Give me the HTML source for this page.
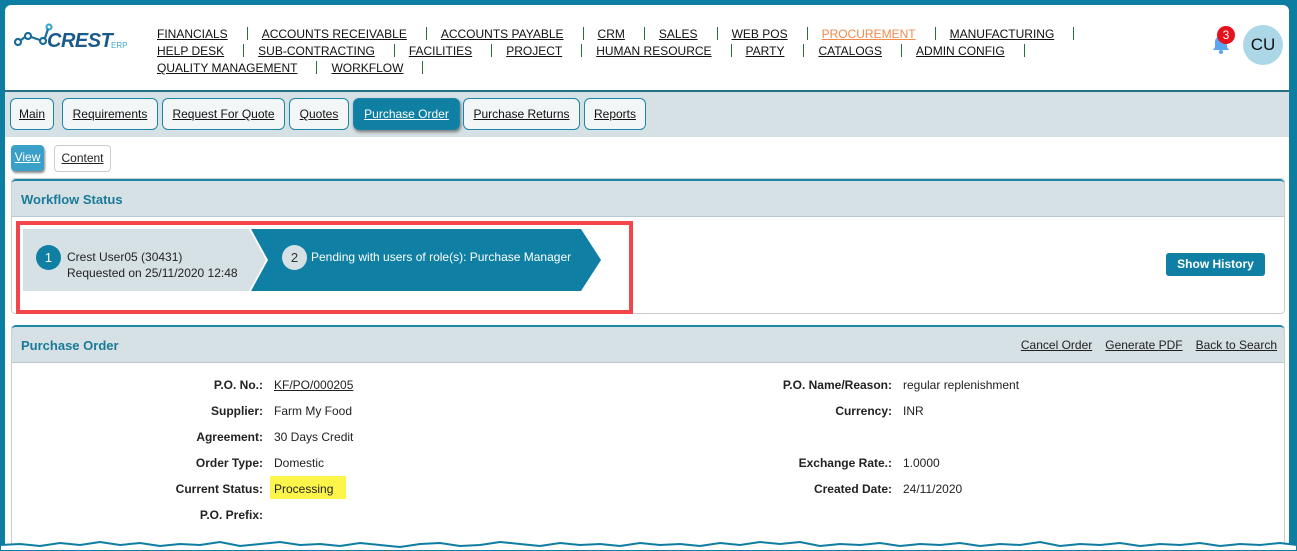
<!DOCTYPE html>
<html><head><style>
*{box-sizing:border-box;margin:0;padding:0}
body{width:1297px;height:551px;background:#0d7ea2;font-family:"Liberation Sans",Arial,sans-serif;font-size:12px;color:#222;position:relative;overflow:hidden}
.page{position:absolute;left:5px;top:5px;width:1284px;height:546px;background:#fff;border-radius:6px 6px 0 0;overflow:hidden}
.abs{position:absolute}
.nav{position:absolute;left:152px;top:21px;font-size:12px;line-height:17px;color:#111}
.nav div{white-space:nowrap}
.nav a{color:#111;text-decoration:underline}
.nav .s{display:inline-block;width:1px;height:13px;background:#2e6b3a;margin:0 14px -2px 19px}
.tabbar{position:absolute;left:0;top:85px;width:1284px;height:47px;background:#d6e1e6;border-top:2px solid #2a6f8a}
.tab{position:absolute;top:6px;height:32px;border:1px solid #1b86a8;border-radius:6px;background:#f2f6f6;font-size:12px;text-align:center;line-height:30px;text-decoration:underline;color:#111}
.tab.on{background:#0f7fa3;color:#fff;box-shadow:1px 2px 3px #777}
.panel{position:absolute;left:6px;width:1274px;border:1px solid #ccc;border-radius:4px}
.ph{height:38px;background:#d6e1e6;border-bottom:1px solid #b9c8cf;border-top:2px solid #1b86a8;border-radius:4px 4px 0 0;color:#1a7a98;font-weight:bold;font-size:13px;padding:11px 9px}
.lbl{position:absolute;font-weight:bold;text-align:right;font-size:12px}
.val{position:absolute;font-size:12px}
</style></head><body>
<div class="page">
 <svg class="abs" style="left:8px;top:17px" width="115" height="32" viewBox="0 0 115 32">
  <g fill="none" stroke="#1a6d99" stroke-width="2.2"><circle cx="5" cy="20" r="3"/><circle cx="15" cy="14" r="3"/><circle cx="30" cy="19" r="3"/><circle cx="36" cy="5" r="2.5" stroke="#3fa7cf"/><path d="M8 18l4-3M18 15l9 3M32 16l3-9"/></g>
  <text x="34" y="25" font-family="Liberation Sans" font-style="italic" font-weight="bold" font-size="20" fill="#1a5a8a" letter-spacing="-0.5">CREST</text>
  <text x="98" y="26" font-family="Liberation Sans" font-size="8" fill="#3fa7cf">ERP</text>
 </svg>
 <div class="nav">
  <div><a>FINANCIALS</a><span class="s"></span><a>ACCOUNTS RECEIVABLE</a><span class="s"></span><a>ACCOUNTS PAYABLE</a><span class="s"></span><a>CRM</a><span class="s"></span><a>SALES</a><span class="s"></span><a>WEB POS</a><span class="s"></span><a style="color:#f08a4b">PROCUREMENT</a><span class="s"></span><a>MANUFACTURING</a><span class="s"></span></div>
  <div><a>HELP DESK</a><span class="s"></span><a>SUB-CONTRACTING</a><span class="s"></span><a>FACILITIES</a><span class="s"></span><a>PROJECT</a><span class="s"></span><a>HUMAN RESOURCE</a><span class="s"></span><a>PARTY</a><span class="s"></span><a>CATALOGS</a><span class="s"></span><a>ADMIN CONFIG</a><span class="s"></span></div>
  <div><a>QUALITY MANAGEMENT</a><span class="s"></span><a>WORKFLOW</a><span class="s"></span></div>
 </div>
 <svg class="abs" style="left:1204px;top:27px" width="24" height="24" viewBox="0 0 24 24"><path d="M4 18h16l-2-3v-5a6 6 0 0 0-12 0v5z" fill="#5aa7f0"/><circle cx="12" cy="20" r="2" fill="#5aa7f0"/></svg>
 <div class="abs" style="left:1212px;top:21px;width:18px;height:18px;border-radius:50%;background:#e8101a;color:#fff;font-size:12px;text-align:center;line-height:18px">3</div>
 <div class="abs" style="left:1238px;top:20px;width:40px;height:40px;border-radius:50%;background:#acd7e6;color:#111;font-size:17px;text-align:center;line-height:40px">CU</div>
 <div class="tabbar">
  <div class="tab" style="left:5px;width:44px">Main</div>
  <div class="tab" style="left:57px;width:96px">Requirements</div>
  <div class="tab" style="left:157px;width:123px">Request For Quote</div>
  <div class="tab" style="left:284px;width:60px">Quotes</div>
  <div class="tab on" style="left:348px;width:107px">Purchase Order</div>
  <div class="tab" style="left:458px;width:117px">Purchase Returns</div>
  <div class="tab" style="left:579px;width:62px">Reports</div>
 </div>
 <div class="abs" style="left:6px;top:140px;width:33px;height:26px;background:#3aa0c8;border-radius:4px;color:#fff;text-decoration:underline;text-align:center;line-height:24px;box-shadow:1px 2px 2px #888">View</div>
 <div class="abs" style="left:49px;top:140px;width:57px;height:27px;border:1px solid #ccc;border-radius:4px;text-decoration:underline;text-align:center;line-height:25px">Content</div>
 <div class="panel" style="top:173px;height:136px">
  <div class="ph">Workflow Status</div>
  <svg class="abs" style="left:11px;top:50px" width="590" height="62"><polygon points="0,0 226,0 243,31 226,62 0,62" fill="#d6e1e6"/><polygon points="228,0 558,0 578,31 558,62 228,62 245,31" fill="#0f7fa3"/></svg>
  <div class="abs" style="left:24px;top:66px;width:25px;height:25px;border-radius:50%;background:#0f7fa3;color:#fff;text-align:center;line-height:25px;font-size:13px">1</div>
  <div class="abs" style="left:55px;top:70px;line-height:16px">Crest User05 (30431)<br>Requested on 25/11/2020 12:48</div>
  <div class="abs" style="left:270px;top:66px;width:25px;height:25px;border-radius:50%;background:#d6e1e6;color:#333;text-align:center;line-height:25px;font-size:13px">2</div>
  <div class="abs" style="left:299px;top:71px;color:#fff">Pending with users of role(s): Purchase Manager</div>
  <div class="abs" style="left:4px;top:42px;width:617px;height:93px;border:4px solid #f4454a"></div>
  <div class="abs" style="left:1154px;top:74px;width:99px;height:23px;background:#0f7fa3;border-radius:3px;color:#fff;font-weight:bold;text-align:center;line-height:23px">Show History</div>
 </div>
 <div class="panel" style="top:320px;height:240px;border-top:none">
  <div class="ph">Purchase Order</div>
  <div class="abs" style="right:7px;top:13px;font-size:12px;text-decoration:underline;word-spacing:0"><span>Cancel Order</span><span style="margin-left:13px">Generate PDF</span><span style="margin-left:13px">Back to Search</span></div>
  <div class="lbl" style="right:1021px;top:53px">P.O. No.:</div><div class="val" style="left:262px;top:53px;text-decoration:underline">KF/PO/000205</div>
  <div class="lbl" style="right:1021px;top:79px">Supplier:</div><div class="val" style="left:262px;top:79px">Farm My Food</div>
  <div class="lbl" style="right:1021px;top:105px">Agreement:</div><div class="val" style="left:262px;top:105px">30 Days Credit</div>
  <div class="lbl" style="right:1021px;top:131px">Order Type:</div><div class="val" style="left:262px;top:131px">Domestic</div>
  <div class="lbl" style="right:1021px;top:157px">Current Status:</div><div class="val" style="left:258px;top:151px;width:76px;height:23px;background:#fdf54a;padding:6px 0 0 4px">Processing</div>
  <div class="lbl" style="right:1021px;top:183px">P.O. Prefix:</div>
  <div class="lbl" style="right:392px;top:53px">P.O. Name/Reason:</div><div class="val" style="left:891px;top:53px">regular replenishment</div>
  <div class="lbl" style="right:392px;top:79px">Currency:</div><div class="val" style="left:891px;top:79px">INR</div>
  <div class="lbl" style="right:392px;top:131px">Exchange Rate.:</div><div class="val" style="left:891px;top:131px">1.0000</div>
  <div class="lbl" style="right:392px;top:157px">Created Date:</div><div class="val" style="left:891px;top:157px">24/11/2020</div>
 </div>
</div>
<svg class="abs" style="left:0;top:536px" width="1297" height="15"><path d="M0 9 L20 8 L40 10 L60 7 L80 9 L100 6 L120 9 L140 7 L160 10 L180 8 L200 9 L220 6 L240 10 L260 8 L280 6 L300 9 L320 8 L340 10 L360 7 L380 9 L400 11 L420 8 L440 7 L460 10 L480 9 L500 6 L520 8 L540 10 L560 7 L580 9 L600 8 L620 10 L640 7 L660 9 L680 8 L700 10 L720 7 L740 9 L760 6 L780 8 L800 6 L820 10 L840 8 L860 9 L880 7 L900 10 L920 8 L940 9 L960 7 L980 10 L1000 8 L1020 9 L1040 6 L1060 10 L1080 8 L1100 9 L1120 7 L1140 10 L1160 8 L1180 9 L1200 7 L1220 10 L1240 8 L1260 9 L1280 7 L1297 9 L1297 15 L0 15Z" fill="#fff" stroke="#0d7ea2" stroke-width="2"/></svg>
</body></html>
